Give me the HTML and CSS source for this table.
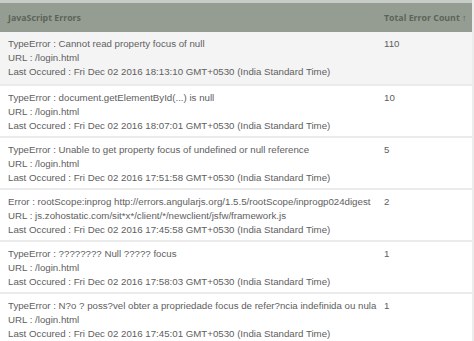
FILE: index.html
```html
<!DOCTYPE html>
<html>
<head>
<meta charset="utf-8">
<link rel="stylesheet" href="styles.css">
</head>
<body>
<div class="table">
  <div class="head">
    <div class="c1">JavaScript Errors</div>
    <div class="c2">Total Error Count <span class="arrow">↑</span></div>
  </div>
  <div class="row hl">
    <div class="c1">TypeError : Cannot read property focus of null<br>URL : /login.html<br>Last Occured : Fri Dec 02 2016 18:13:10 GMT+0530 (India Standard Time)</div>
    <div class="c2">110</div>
  </div>
  <div class="row">
    <div class="c1">TypeError : document.getElementById(...) is null<br>URL : /login.html<br>Last Occured : Fri Dec 02 2016 18:07:01 GMT+0530 (India Standard Time)</div>
    <div class="c2">10</div>
  </div>
  <div class="row">
    <div class="c1">TypeError : Unable to get property focus of undefined or null reference<br>URL : /login.html<br>Last Occured : Fri Dec 02 2016 17:51:58 GMT+0530 (India Standard Time)</div>
    <div class="c2">5</div>
  </div>
  <div class="row">
    <div class="c1">Error : rootScope:inprog http://errors.angularjs.org/1.5.5/rootScope/inprogp024digest<br>URL : js.zohostatic.com/sit*x*/client/*/newclient/jsfw/framework.js<br>Last Occured : Fri Dec 02 2016 17:45:58 GMT+0530 (India Standard Time)</div>
    <div class="c2">2</div>
  </div>
  <div class="row">
    <div class="c1">TypeError : ???????? Null ????? focus<br>URL : /login.html<br>Last Occured : Fri Dec 02 2016 17:58:03 GMT+0530 (India Standard Time)</div>
    <div class="c2">1</div>
  </div>
  <div class="row">
    <div class="c1">TypeError : N?o ? poss?vel obter a propriedade focus de refer?ncia indefinida ou nula<br>URL : /login.html<br>Last Occured : Fri Dec 02 2016 17:45:01 GMT+0530 (India Standard Time)</div>
    <div class="c2">1</div>
  </div>
</div>
</body>
</html>
```
FILE: styles.css
```css
html, body {
  margin: 0;
  padding: 0;
  background: #ffffff;
}
body {
  font-family: "Liberation Sans", Arial, sans-serif;
  font-size: 9.7px;
  color: #606060;
}
.table {
  width: 472px;
  background: #fff;
  border-right: 2px solid #ececec;
}
.head {
  display: flex;
  align-items: center;
  height: 29px;
  background: #959d93;
  color: #5c6459;
  font-weight: bold;
  font-size: 8.8px;
  font-family: "Open Sans", sans-serif;
  border-top: 3px solid #c8ccc6;
}
.c1 {
  flex: 1;
  min-width: 0;
  padding-left: 8px;
  white-space: nowrap;
}
.c2 {
  width: 88px;
  flex: none;
  white-space: nowrap;
}
.arrow {
  font-weight: normal;
}
.row {
  display: flex;
  align-items: flex-start;
  line-height: 14px;
  padding: 5px 0 3px;
  border-bottom: 2px solid #ebebeb;
}
.row.hl {
  background: #f4f4f4;
  padding-bottom: 5px;
}
```
